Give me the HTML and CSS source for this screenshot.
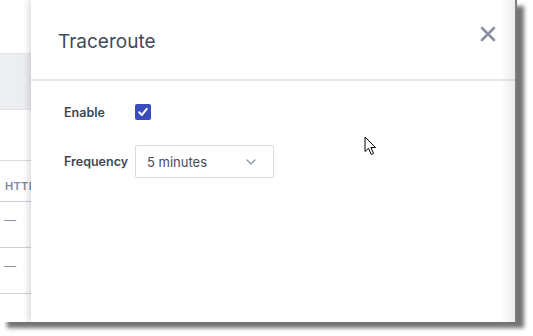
FILE: index.html
```html
<!DOCTYPE html>
<html>
<head>
<meta charset="utf-8">
<link rel="stylesheet" href="styles.css">
</head>
<body>
<div class="window">
  <div class="page">
    <div class="gap-top"></div>
    <div class="band"></div>
    <div class="gap-mid"></div>
    <div class="thead">HTTP</div>
    <div class="trow">—</div>
    <div class="trow">—</div>
  </div>
  <div class="modal">
    <div class="modal-header">
      <h2 class="modal-title">Traceroute</h2>
      <svg class="close" width="16" height="16" viewBox="0 0 16 16"><path d="M2 2 L14 14 M14 2 L2 14" stroke="#8a92a2" stroke-width="2.6" stroke-linecap="round"/></svg>
    </div>
    <div class="modal-body">
      <div class="field">
        <span class="label">Enable</span>
        <span class="checkbox"><svg width="16" height="16" viewBox="0 0 16 16"><path d="M4.2 8.3 L6.8 11 L11.8 4.8" fill="none" stroke="#fff" stroke-width="2" stroke-linecap="round" stroke-linejoin="round"/></svg></span>
      </div>
      <div class="field">
        <span class="label">Frequency</span>
        <div class="select">
          <span>5 minutes</span>
          <svg width="10" height="6" viewBox="0 0 10 6"><path d="M1 1 L5 5 L9 1" fill="none" stroke="#8a93a0" stroke-width="1.3" stroke-linecap="round" stroke-linejoin="round"/></svg>
        </div>
      </div>
    </div>
    <div class="modal-fade"></div>
    <svg class="cursor" width="14" height="20" viewBox="0 0 14 20"><path d="M1 1 L1 15.5 L4.5 12.3 L7.3 18.5 L9.6 17.5 L6.9 11.5 L11.5 11.5 Z" fill="#fff" stroke="#000" stroke-width="1" stroke-linejoin="miter"/></svg>
  </div>
</div>
</body>
</html>
```

FILE: styles.css
```css
html, body {
  margin: 0;
  padding: 0;
  background: #ffffff;
  width: 533px;
  height: 336px;
  overflow: hidden;
  font-family: Inter, "Noto Sans", sans-serif;
}
.window {
  position: relative;
  width: 515px;
  height: 322px;
  background: #fff;
  border-right: 2px solid #7d7d7d;
  box-shadow: 7px 6px 4px rgba(0,0,0,0.55);
  overflow: hidden;
}
.page {
  width: 40px;
}
.gap-top { height: 53px; }
.band {
  height: 55px;
  background: #eceef1;
  border-top: 1px solid #e2e4e8;
  border-bottom: 1px solid #e2e4e8;
}
.gap-mid {
  height: 50px;
  border-bottom: 1px solid #d9dce1;
}
.thead {
  height: 41px;
  line-height: 50px;
  box-sizing: border-box;
  padding-left: 5px;
  font-size: 11px;
  font-weight: 600;
  color: #7c86a6;
  border-bottom: 1px solid #c8cce4;
  letter-spacing: 0.3px;
}
.trow {
  height: 45px;
  line-height: 36px;
  padding-left: 4px;
  font-size: 12px;
  color: #8d8f9c;
  border-bottom: 1px solid #cfd2d9;
}
.modal {
  position: absolute;
  left: 31px;
  top: 0;
  right: 0;
  bottom: 0;
  background: #fff;
  box-shadow: -3px 0 6px rgba(0,0,0,0.13);
}
.modal-fade {
  position: absolute;
  top: 0;
  right: 0;
  bottom: 0;
  width: 14px;
  background: linear-gradient(to right, rgba(0,0,0,0), rgba(0,0,0,0.07));
}
.modal-header {
  height: 81px;
  box-sizing: border-box;
  border-bottom: 2px solid #e4e6ea;
  display: flex;
  align-items: center;
  justify-content: space-between;
  padding: 3px 19px 0 27px;
}
.modal-title {
  margin: 0;
  font-size: 19px;
  font-weight: 400;
  color: #414b56;
}
.close { display: block; margin-top: -14px; }
.modal-body {
  padding: 23px 33px;
  display: flex;
  flex-direction: column;
  gap: 25px;
}
.field {
  display: flex;
  align-items: center;
}
.label {
  width: 71px;
  font-size: 12.5px;
  font-weight: 600;
  color: #3d4752;
}
.checkbox {
  width: 16px;
  height: 16px;
  border-radius: 2px;
  background: #3a4dbf;
  display: flex;
}
.select {
  width: 139px;
  height: 33px;
  box-sizing: border-box;
  border: 1px solid #d8dbe0;
  border-radius: 2px;
  display: flex;
  align-items: center;
  justify-content: space-between;
  padding: 0 17px 0 11px;
  font-size: 13px;
  color: #454c55;
}
.cursor {
  position: absolute;
  left: 333px;
  top: 136px;
}
```
